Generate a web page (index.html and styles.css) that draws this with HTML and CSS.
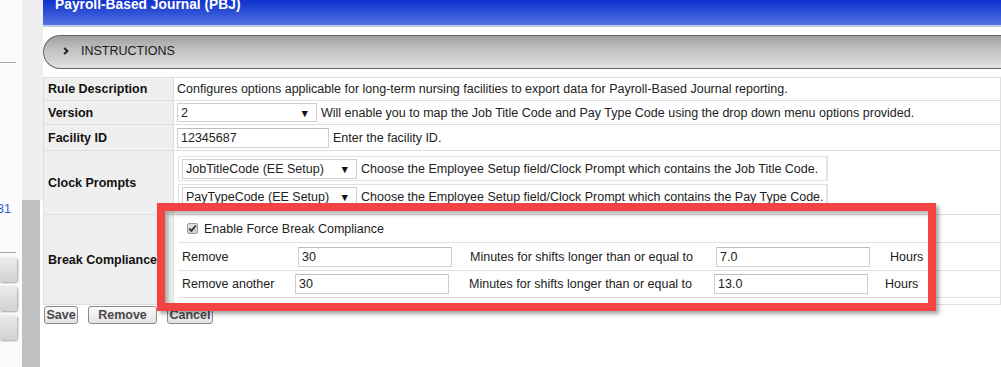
FILE: index.html
```html
<!DOCTYPE html>
<html>
<head>
<meta charset="utf-8">
<title>Payroll-Based Journal (PBJ)</title>
<link rel="stylesheet" href="styles.css">
</head>
<body>
<div class="app">
  <aside class="sidebar">
    <div class="side-rule side-rule-top"></div>
    <div class="side-link">31</div>
    <div class="side-rule side-rule-bottom"></div>
    <div class="side-btn"></div>
    <div class="side-btn"></div>
    <div class="side-btn"></div>
  </aside>
  <div class="gutter">
    <div class="gutter-top"></div>
    <div class="gutter-bar"></div>
  </div>
  <main class="main">
    <header class="page-header">Payroll-Based Journal (PBJ)</header>
    <div class="instructions">
      <svg class="chev" width="6" height="8" viewBox="0 0 6 8"><polyline points="1.2,1 4.4,4 1.2,7" fill="none" stroke="#222" stroke-width="2"/></svg>
      <span>INSTRUCTIONS</span>
    </div>
    <table class="form">
      <tr class="r-desc">
        <th>Rule Description</th>
        <td>Configures options applicable for long-term nursing facilities to export data for Payroll-Based Journal reporting.</td>
      </tr>
      <tr class="r-version">
        <th>Version</th>
        <td><div class="inline"><div class="select sel-version"><span>2</span><span class="arrow">▼</span></div><span class="hint">Will enable you to map the Job Title Code and Pay Type Code using the drop down menu options provided.</span></div></td>
      </tr>
      <tr class="r-facility">
        <th>Facility ID</th>
        <td><div class="inline"><div class="input inp-facility">12345687</div><span class="hint">Enter the facility ID.</span></div></td>
      </tr>
      <tr class="r-clock">
        <th>Clock Prompts</th>
        <td>
          <div class="prompts">
            <div class="prompt"><div class="select sel-clock"><span>JobTitleCode (EE Setup)</span><span class="arrow">▼</span></div><span class="hint">Choose the Employee Setup field/Clock Prompt which contains the Job Title Code.</span></div>
            <div class="prompt"><div class="select sel-clock"><span>PayTypeCode (EE Setup)</span><span class="arrow">▼</span></div><span class="hint">Choose the Employee Setup field/Clock Prompt which contains the Pay Type Code.</span></div>
          </div>
        </td>
      </tr>
      <tr class="r-break">
        <th>Break Compliance</th>
        <td>
          <div class="breaks">
            <div class="brow brow-check">
              <span class="checkbox"><svg width="9" height="9" viewBox="0 0 9 9"><polyline points="1.3,4.6 3.4,6.9 7.8,1.6" fill="none" stroke="#333" stroke-width="1.7"/></svg></span>
              <span>Enable Force Break Compliance</span>
            </div>
            <div class="brow brow-a">
              <span class="c-label">Remove</span>
              <div class="input inp-min">30</div>
              <span class="c-text">Minutes for shifts longer than or equal to</span>
              <div class="input inp-hrs">7.0</div>
              <span class="c-unit">Hours</span>
            </div>
            <div class="brow brow-b">
              <span class="c-label">Remove another</span>
              <div class="input inp-min">30</div>
              <span class="c-text">Minutes for shifts longer than or equal to</span>
              <div class="input inp-hrs">13.0</div>
              <span class="c-unit">Hours</span>
            </div>
          </div>
        </td>
      </tr>
    </table>
    <div class="actions">
      <button class="btn btn-save">Save</button>
      <button class="btn btn-remove">Remove</button>
      <button class="btn btn-cancel">Cancel</button>
    </div>
    <div class="highlight"></div>
  </main>
</div>
</body>
</html>
```
FILE: styles.css
```css
* { box-sizing: border-box; }
html, body { margin: 0; padding: 0; background: #fff; }
body {
  font-family: "Liberation Sans", Arial, sans-serif;
  font-size: 12.5px;
  color: #222;
}
.app {
  display: flex;
  width: 1001px;
  height: 367px;
  overflow: hidden;
}

/* left sidebar fragment */
.sidebar {
  width: 22px;
  flex: none;
  background: #fbfbfb;
  display: flex;
  flex-direction: column;
  overflow: hidden;
}
.side-rule {
  width: 16px;
  height: 1px;
  background: #a9a9a9;
}
.side-rule-top { margin-top: 62px; }
.side-link {
  margin-top: 139px;
  margin-left: -3px;
  line-height: 14px;
  color: #2a5bd7;
  white-space: nowrap;
}
.side-rule-bottom { margin-top: 36px; }
.side-btn {
  width: 17px;
  height: 25px;
  margin-top: 4px;
  border-radius: 0 3px 3px 0;
  background: linear-gradient(#ececec, #d2d2d2);
  box-shadow: 1px 1px 2px rgba(0,0,0,0.35);
}
.side-btn:first-of-type { margin-top: 10px; }

.gutter {
  width: 21px;
  flex: none;
  display: flex;
  flex-direction: column;
}
.gutter-top { height: 200px; background: #efefef; }
.gutter-bar {
  flex: 1;
  background: #c0c0c0;
  border-right: 3px solid #fff;
}

/* main */
.main {
  flex: 1;
  position: relative;
  min-width: 0;
}
.page-header {
  height: 29px;
  padding: 0 0 0 12px;
  background: linear-gradient(#0b2ccd, #2f51d6 55%, #5474e0);
  border-bottom: 2px solid #c3c9e3;
  color: #fff;
  font-size: 13.8px;
  font-weight: bold;
  line-height: 14px;
  margin-top: -2px;
}
.instructions {
  margin-top: 8px;
  height: 34px;
  border: 1px solid #666;
  border-right: none;
  border-radius: 17px 0 0 17px;
  background: linear-gradient(#9f9f9f, #bdbdbd 35%, #d2d2d2 75%, #e2e2e2);
  display: flex;
  align-items: center;
  padding: 0 0 3px 19px;
  font-size: 12.5px;
  color: #1a1a1a;
}
.chev { margin-right: 12px; margin-top: 1px; }

/* form table */
.form {
  margin-top: 8px;
  width: 958px;
  border-collapse: collapse;
  border: 1px solid #dedede;
}
.form th, .form td {
  border: 1px solid #dedede;
  padding: 0;
  vertical-align: middle;
  text-align: left;
}
.form th {
  width: 130px;
  background: #efefef;
  font-weight: bold;
  color: #111;
  padding-left: 4px;
  white-space: nowrap;
}
.form td { padding-left: 3px; }
.r-desc { height: 23px; }
.r-version { height: 24px; }
.r-facility { height: 26px; }
.r-clock { height: 64px; }
.r-break { height: 90px; }
.r-break td { vertical-align: top; padding-left: 4px; }

.inline { display: flex; align-items: center; }
.hint { margin-left: 4px; white-space: nowrap; }
.select {
  height: 19px;
  border: 1px solid #cfcfcf;
  background: #fff;
  display: flex;
  align-items: center;
  justify-content: space-between;
  padding: 0 6px 0 3px;
  color: #222;
}
.arrow { font-size: 10.5px; color: #111; }
.sel-version { width: 140px; }
.sel-clock { width: 175px; height: 20px; }
.input {
  height: 20px;
  border: 1px solid #cfcfcf;
  border-top-color: #bdbdbd;
  background: #fff;
  padding-left: 3px;
  display: flex;
  align-items: center;
}
.inp-facility { width: 152px; }

.prompts {
  display: flex;
  flex-direction: column;
  gap: 3px;
  padding-left: 1px;
}
.prompt {
  display: flex;
  align-items: center;
  width: 650px;
  height: 25px;
  border: 1px solid #e2e2e2;
  border-right-width: 2px;
  padding-left: 3px;
}

.breaks { display: flex; flex-direction: column; }
.brow {
  display: flex;
  align-items: center;
  border-bottom: 1px solid #e0e0e0;
  white-space: nowrap;
}
.brow-check { height: 28px; padding-left: 9px; }
.brow-a { height: 28px; }
.brow-b { height: 27px; }
.checkbox {
  width: 11px;
  height: 11px;
  border: 1px solid #9a9a9a;
  border-radius: 2px;
  background: linear-gradient(#e4e4e4, #cfcfcf);
  display: flex;
  align-items: center;
  justify-content: center;
  margin-right: 6px;
}
.c-label { padding-left: 4px; }
.brow-a .c-label { width: 120px; }
.brow-b .c-label { width: 117px; }
.inp-min { width: 154px; }
.brow-a .c-text { margin-left: 18px; width: 246px; }
.brow-b .c-text { margin-left: 20px; width: 245px; }
.inp-hrs { width: 154px; }
.brow-a .c-unit { margin-left: 20px; }
.brow-b .c-unit { margin-left: 17px; }

.actions {
  display: flex;
  gap: 10px;
  margin-top: 1px;
  padding-left: 1px;
}
.btn {
  font-family: "Liberation Sans", Arial, sans-serif;
  font-size: 12.5px;
  font-weight: bold;
  color: #4a4a4a;
  height: 18px;
  padding: 0;
  border: 1px solid #8a8a8a;
  border-radius: 3px;
  background: linear-gradient(#fbfbfb, #e2e2e2);
  line-height: 15px;
}
.btn-save { width: 34px; }
.btn-remove { width: 69px; }
.btn-cancel { width: 46px; }

/* annotation frame drawn over the form */
.highlight {
  position: absolute;
  left: 114px;
  top: 203px;
  width: 779px;
  height: 108px;
  border: 8px solid #f44343;
  box-shadow: 3px 3px 4px rgba(0,0,0,0.35), inset 3px 3px 4px rgba(0,0,0,0.3);
  pointer-events: none;
}
```
